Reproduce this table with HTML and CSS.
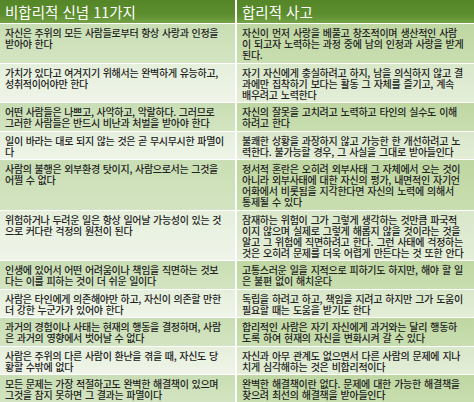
FILE: index.html
```html
<!DOCTYPE html>
<html lang="ko">
<head>
<meta charset="utf-8">
<link rel="stylesheet" href="styles.css">
</head>
<body>
<div class="sheet">
  <div class="head">비합리적 신념 11가지</div>
  <div class="head">합리적 사고</div>

  <div class="cell l odd">자신은 주위의 모든 사람들로부터 항상 사랑과 인정을<br>받아야 한다</div>
  <div class="cell r odd">자신이 먼저 사랑을 베풀고 창조적이며 생산적인 사람<br>이 되고자 노력하는 과정 중에 남의 인정과 사랑을 받게<br>된다.</div>

  <div class="cell l even">가치가 있다고 여겨지기 위해서는 완벽하게 유능하고,<br>성취적이어야만 한다</div>
  <div class="cell r even">자기 자신에게 충실하려고 하지, 남을 의식하지 않고 결<br>과에만 집착하기 보다는 활동 그 자체를 즐기고, 계속<br>배우려고 노력한다</div>

  <div class="cell l odd">어떤 사람들은 나쁘고, 사악하고, 악랄하다. 그러므로<br>그러한 사람들은 반드시 비난과 처벌을 받아야 한다</div>
  <div class="cell r odd">자신의 잘못을 고치려고 노력하고 타인의 실수도 이해<br>하려고 한다</div>

  <div class="cell l even">일이 바라는 대로 되지 않는 것은 곧 무시무시한 파멸이<br>다</div>
  <div class="cell r even">불쾌한 상황을 과장하지 않고 가능한 한 개선하려고 노<br>력한다. 불가능할 경우, 그 사실을 그대로 받아들인다</div>

  <div class="cell l odd">사람의 불행은 외부환경 탓이지, 사람으로서는 그것을<br>어쩔 수 없다</div>
  <div class="cell r odd">정서적 혼란은 오히려 외부사태 그 자체에서 오는 것이<br>아니라 외부사태에 대한 자신의 평가, 내면적인 자기언<br>어화에서 비롯됨을 지각한다면 자신의 노력에 의해서<br>통제될 수 있다</div>

  <div class="cell l even">위험하거나 두려운 일은 항상 일어날 가능성이 있는 것<br>으로 커다란 걱정의 원천이 된다</div>
  <div class="cell r even">잠재하는 위험이 그가 그렇게 생각하는 것만큼 파국적<br>이지 않으며 실제로 그렇게 해롭지 않을 것이라는 것을<br>알고 그 위험에 직면하려고 한다. 그런 사태에 걱정하는<br>것은 오히려 문제를 더욱 어렵게 만든다는 것 또한 안다</div>

  <div class="cell l odd">인생에 있어서 어떤 어려움이나 책임을 직면하는 것보<br>다는 이를 피하는 것이 더 쉬운 일이다</div>
  <div class="cell r odd">고통스러운 일을 지적으로 피하기도 하지만, 해야 할 일<br>은 불편 없이 해치운다</div>

  <div class="cell l even">사람은 타인에게 의존해야만 하고, 자신이 의존할 만한<br>더 강한 누군가가 있어야 한다</div>
  <div class="cell r even">독립을 하려고 하고, 책임을 지려고 하지만 그가 도움이<br>필요할 때는 도움을 받기도 한다</div>

  <div class="cell l odd">과거의 경험이나 사태는 현재의 행동을 결정하며, 사람<br>은 과거의 영향에서 벗어날 수 없다</div>
  <div class="cell r odd">합리적인 사람은 자기 자신에게 과거와는 달리 행동하<br>도록 하여 현재의 자신을 변화시켜 갈 수 있다</div>

  <div class="cell l even">사람은 주위의 다른 사람이 환난을 겪을 때, 자신도 당<br>황할 수밖에 없다</div>
  <div class="cell r even">자신과 아무 관계도 없으면서 다른 사람의 문제에 지나<br>치게 심각해하는 것은 비합리적이다</div>

  <div class="cell l odd">모든 문제는 가장 적절하고도 완벽한 해결책이 있으며<br>그것을 참지 못하면 그 결과는 파멸이다</div>
  <div class="cell r odd">완벽한 해결책이란 없다. 문제에 대한 가능한 해결책을<br>찾으려 최선의 해결책을 받아들인다</div>
</div>
</body>
</html>
```

FILE: styles.css
```css
html, body {
  margin: 0;
  padding: 0;
  background: #ffffff;
}

.sheet {
  width: 474px;
  height: 402px;
  overflow: hidden;
  display: grid;
  grid-template-columns: 235px 237px;
  column-gap: 2px;
  row-gap: 1px;
  align-content: start;
  background: #ffffff;
  font-family: "Noto Sans CJK KR", "Noto Sans", sans-serif;
  color: #222222;
}

.head {
  height: 23px;
  padding-left: 5px;
  display: flex;
  align-items: center;
  font-size: 14.5px;
  color: #ffffff;
  background: linear-gradient(to bottom, #548526 0%, #5b8c2d 60%, #74a146 100%);
  white-space: nowrap;
}

.cell {
  min-width: 0;
  padding: 3px 2px 2.5px 5px;
  font-size: 10px;
  font-weight: 500;
  line-height: 11px;
  letter-spacing: -0.3px;
  word-spacing: 0.4px;
  white-space: nowrap;
}

.r {
  padding-left: 5px;
  word-spacing: 0.7px;
}

.l.odd {
  background: linear-gradient(to bottom, #c9deb4 0%, #d3e4c2 100%);
}

.l.even {
  background: linear-gradient(to bottom, #e5efdc 0%, #eff5e9 100%);
}

.r.odd {
  background: linear-gradient(to bottom, #bfd7a2 0%, #c9deb0 100%);
}

.r.even {
  background: linear-gradient(to bottom, #d9e7ca 0%, #e4eed8 100%);
}
```
